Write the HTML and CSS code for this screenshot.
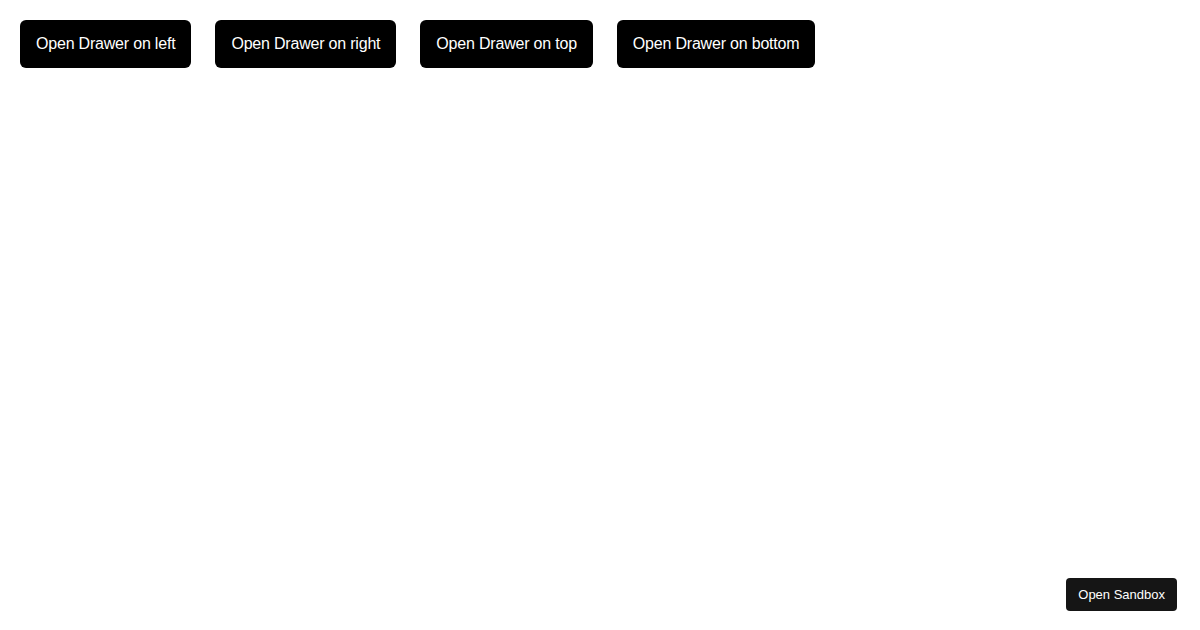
FILE: index.html
```html
<!DOCTYPE html>
<html lang="en">
<head>
<meta charset="utf-8">
<title>Drawer</title>
<link rel="stylesheet" href="styles.css">
</head>
<body>
<div class="toolbar">
  <button class="btn">Open Drawer on left</button>
  <button class="btn">Open Drawer on right</button>
  <button class="btn">Open Drawer on top</button>
  <button class="btn">Open Drawer on bottom</button>
</div>
<button class="sandbox">Open Sandbox</button>
</body>
</html>
```
FILE: styles.css
```css
html, body {
  margin: 0;
  padding: 0;
  background: #fff;
  font-family: "Liberation Sans", Arial, sans-serif;
}
.toolbar {
  display: flex;
  gap: 24px;
  padding: 20px;
}
.btn {
  height: 48px;
  padding: 0 16px;
  border: none;
  border-radius: 6px;
  background: #000;
  color: #fff;
  font-family: "Liberation Sans", Arial, sans-serif;
  font-size: 16px;
  letter-spacing: -0.2px;
  cursor: pointer;
}
.sandbox {
  position: fixed;
  right: 23px;
  bottom: 19px;
  height: 33px;
  padding: 0 12px;
  border: none;
  border-radius: 4px;
  background: #151515;
  color: #fff;
  font-family: "Liberation Sans", Arial, sans-serif;
  font-size: 13px;
}
```
